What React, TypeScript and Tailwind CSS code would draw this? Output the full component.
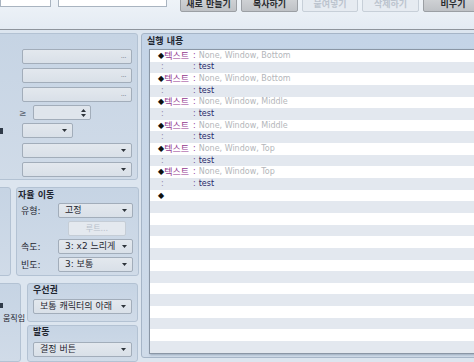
import type { ReactNode } from "react"

const LINES = [
  { kind: "cmd", arg: "None, Window, Bottom" },
  { kind: "text", arg: "test" },
  { kind: "cmd", arg: "None, Window, Bottom" },
  { kind: "text", arg: "test" },
  { kind: "cmd", arg: "None, Window, Middle" },
  { kind: "text", arg: "test" },
  { kind: "cmd", arg: "None, Window, Middle" },
  { kind: "text", arg: "test" },
  { kind: "cmd", arg: "None, Window, Top" },
  { kind: "text", arg: "test" },
  { kind: "cmd", arg: "None, Window, Top" },
  { kind: "text", arg: "test" },
  { kind: "end", arg: "" },
]

const ROW_COUNT = 26

function Caret() {
  return (
    <svg width="5" height="3" viewBox="0 0 5 3" className="shrink-0">
      <path d="M0 0h5L2.5 3z" fill="#2d333a" />
    </svg>
  )
}

function Field({ className, children, caret, dots }: { className?: string; children?: ReactNode; caret?: boolean; dots?: boolean }) {
  return (
    <div
      className={
        "h-[15px] flex items-center rounded-[2px] border border-[#a2adba] bg-gradient-to-b from-[#e3e8ee] to-[#d9e0e8] pl-[6px] pr-[5px] text-[9px] leading-[13px] text-[#1f2630] " +
        (className ?? "")
      }
    >
      <span className="flex-1 whitespace-nowrap">{children}</span>
      {caret && <Caret />}
      {dots && <span className="text-[7px] leading-[7px] text-[#7b8490] tracking-[-0.5px]">...</span>}
    </div>
  )
}

function Panel({ className, children }: { className?: string; children?: ReactNode }) {
  return (
    <div className={"rounded-[3px] border border-[#b3c2d3] bg-gradient-to-b from-[#c6d4e4] to-[#d0dbe8] " + (className ?? "")}>
      {children}
    </div>
  )
}

function ToolButton({ label, w, disabled }: { label: string; w: string; disabled?: boolean }) {
  return (
    <div
      className={
        "h-[21px] flex items-end justify-center pb-[2px] rounded-[2px] border text-[9px] leading-[10px] font-bold " +
        w +
        (disabled
          ? " border-[#c7cfd8] bg-[#e6ebf1] text-[#bcc4ce]"
          : " border-[#9b9fa4] bg-gradient-to-b from-[#dadcdf] to-[#bfc2c6] text-[#2a2d31]")
      }
    >
      {label}
    </div>
  )
}

export default function App() {
  return (
    <div className="w-[474px] h-[362px] overflow-hidden bg-[#dce5ef] font-['DejaVu_Sans','Noto_Sans_CJK_KR',sans-serif] text-[#1f2630] select-none">
      {/* top toolbar, cut off at the top edge */}
      <div className="h-[30px] flex items-start border-b border-[#8e949c] bg-gradient-to-b from-[#eef3f8] to-[#e4ebf3]">
        <div className="-mt-[9px] flex items-start">
          <div className="w-[51px] h-[16px] bg-white border border-[#a9b4c0]" />
          <div className="ml-[7px] w-[109px] h-[16px] bg-white border border-[#a9b4c0]" />
          <div className="ml-[13px] flex gap-[4px]">
            <ToolButton label="새로 만들기" w="w-[57px]" />
            <ToolButton label="복사하기" w="w-[57px]" />
            <ToolButton label="붙여넣기" w="w-[56px]" disabled />
            <ToolButton label="삭제하기" w="w-[57px]" disabled />
            <ToolButton label="비우기" w="w-[60px]" />
          </div>
        </div>
      </div>

      <div className="flex pt-[3px] h-[332px]">
        {/* left column */}
        <div className="w-[138px] shrink-0 flex flex-col">
          <Panel className="-ml-[4px] w-[142px] h-[147px] pl-[25px] pt-[15px]">
            <Field className="w-[110px]" dots />
            <Field className="w-[110px] mt-[4px]" dots />
            <Field className="w-[110px] mt-[4px]" dots />
            <div className="mt-[3px] -ml-[3px] flex items-center">
              <span className="w-[14px] text-[9px] leading-[10px] text-[#56606c]">≥</span>
              <div className="w-[58px] h-[15px] flex items-center justify-end pr-[4px] rounded-[2px] border border-[#a2adba] bg-[#dfe5ec]">
                <svg width="5" height="8" viewBox="0 0 5 8">
                  <path d="M0 3h5L2.5 0z M0 5h5L2.5 8z" fill="#2d333a" />
                </svg>
              </div>
            </div>
            <div className="mt-[3px] -ml-[25px] flex items-center">
              <div className="ml-[3px] w-[3px] h-[6px] bg-[#2f3a48]" />
              <Field className="ml-[19px] w-[51px]" caret />
            </div>
            <Field className="w-[110px] mt-[5px]" caret />
            <Field className="w-[110px] mt-[4px]" caret />
          </Panel>

          <div className="mt-[7px] h-[89px] flex">
            <Panel className="-ml-[4px] w-[15px] shrink-0" />
            <Panel className="ml-[5px] w-[123px] shrink-0 pt-[2px]">
              <div className="pl-[1px] text-[9px] leading-[11px] font-bold">자율 이동</div>
              <div className="mt-[2px] flex items-center">
                <span className="w-[41px] pl-[4px] text-[9px] leading-[10px]">유형:</span>
                <Field className="w-[75px]" caret>고정</Field>
              </div>
              <div className="mt-[3px] ml-[51px] w-[58px] h-[15px] flex items-center justify-center rounded-[2px] border border-[#c5cdd6] bg-[#e4e9ef] text-[8px] text-[#b7c0ca]">
                루트...
              </div>
              <div className="mt-[3px] flex items-center">
                <span className="w-[41px] pl-[4px] text-[9px] leading-[10px]">속도:</span>
                <Field className="w-[75px]" caret>3: x2 느리게</Field>
              </div>
              <div className="mt-[3px] flex items-center">
                <span className="w-[41px] pl-[4px] text-[9px] leading-[10px]">빈도:</span>
                <Field className="w-[75px]" caret>3: 보통</Field>
              </div>
            </Panel>
          </div>

          <div className="mt-[7px] flex-1 flex">
            <Panel className="-ml-[4px] w-[25px] shrink-0 flex flex-col">
              <div className="mt-[19px] ml-[3px] w-[3px] h-[5px] bg-[#2f3a48]" />
              <div className="mt-[6px] ml-[6px] text-[8px] leading-[10px] whitespace-nowrap">움직임</div>
            </Panel>
            <div className="ml-[6px] w-[111px] shrink-0 flex flex-col">
              <Panel className="h-[39px] pl-[5px] pt-[1px]">
                <div className="text-[9px] leading-[11px] font-bold">우선권</div>
                <Field className="mt-[3px] w-[99px]" caret>보통 캐릭터의 아래</Field>
              </Panel>
              <Panel className="mt-[3px] flex-1 pl-[5px] pt-[1px]">
                <div className="text-[9px] leading-[11px] font-bold">발동</div>
                <Field className="mt-[4px] w-[99px]" caret>결정 버튼</Field>
              </Panel>
            </div>
          </div>
        </div>

        {/* right column: command list */}
        <div className="ml-[3px] w-[340px] shrink-0 h-[325px] rounded-[3px] border border-[#a6b5c7] bg-gradient-to-b from-[#c4d4e7] to-[#cfdbe9]">
          <div className="h-[15px] pl-[5px] text-[9px] leading-[14px] font-bold">실행 내용</div>
          <div className="ml-[7px] h-[305px] border-l border-t border-b border-[#8a96a5] bg-white shadow-[1px_1px_2px_rgba(60,80,110,0.35)]">
            {Array.from({ length: ROW_COUNT }).map((_, i) => {
              const line = LINES[i]
              return (
                <div
                  key={i}
                  className={"h-[11.65px] flex items-center pl-[8px] text-[8px] leading-[10px] whitespace-nowrap " + (i % 2 === 0 ? "bg-white" : "bg-[#e3e8ef]")}
                >
                  {line?.kind === "cmd" && (
                    <>
                      <span className="w-[35px] flex items-center">
                        <span className="text-[#111]">◆</span>
                        <span className="text-[9px] text-[#93398f]">텍스트</span>
                      </span>
                      <span className="text-[#93398f]">:</span>
                      <span className="ml-[3px] text-[#b3b6ba]">{line.arg}</span>
                    </>
                  )}
                  {line?.kind === "text" && (
                    <>
                      <span className="w-[35px] pl-[3px] text-[#9186a8]">:</span>
                      <span className="text-[#6b4a8e]">:</span>
                      <span className="ml-[3px] text-[#25276a]">{line.arg}</span>
                    </>
                  )}
                  {line?.kind === "end" && <span className="text-[#111]">◆</span>}
                </div>
              )
            })}
          </div>
        </div>
      </div>
    </div>
  )
}
